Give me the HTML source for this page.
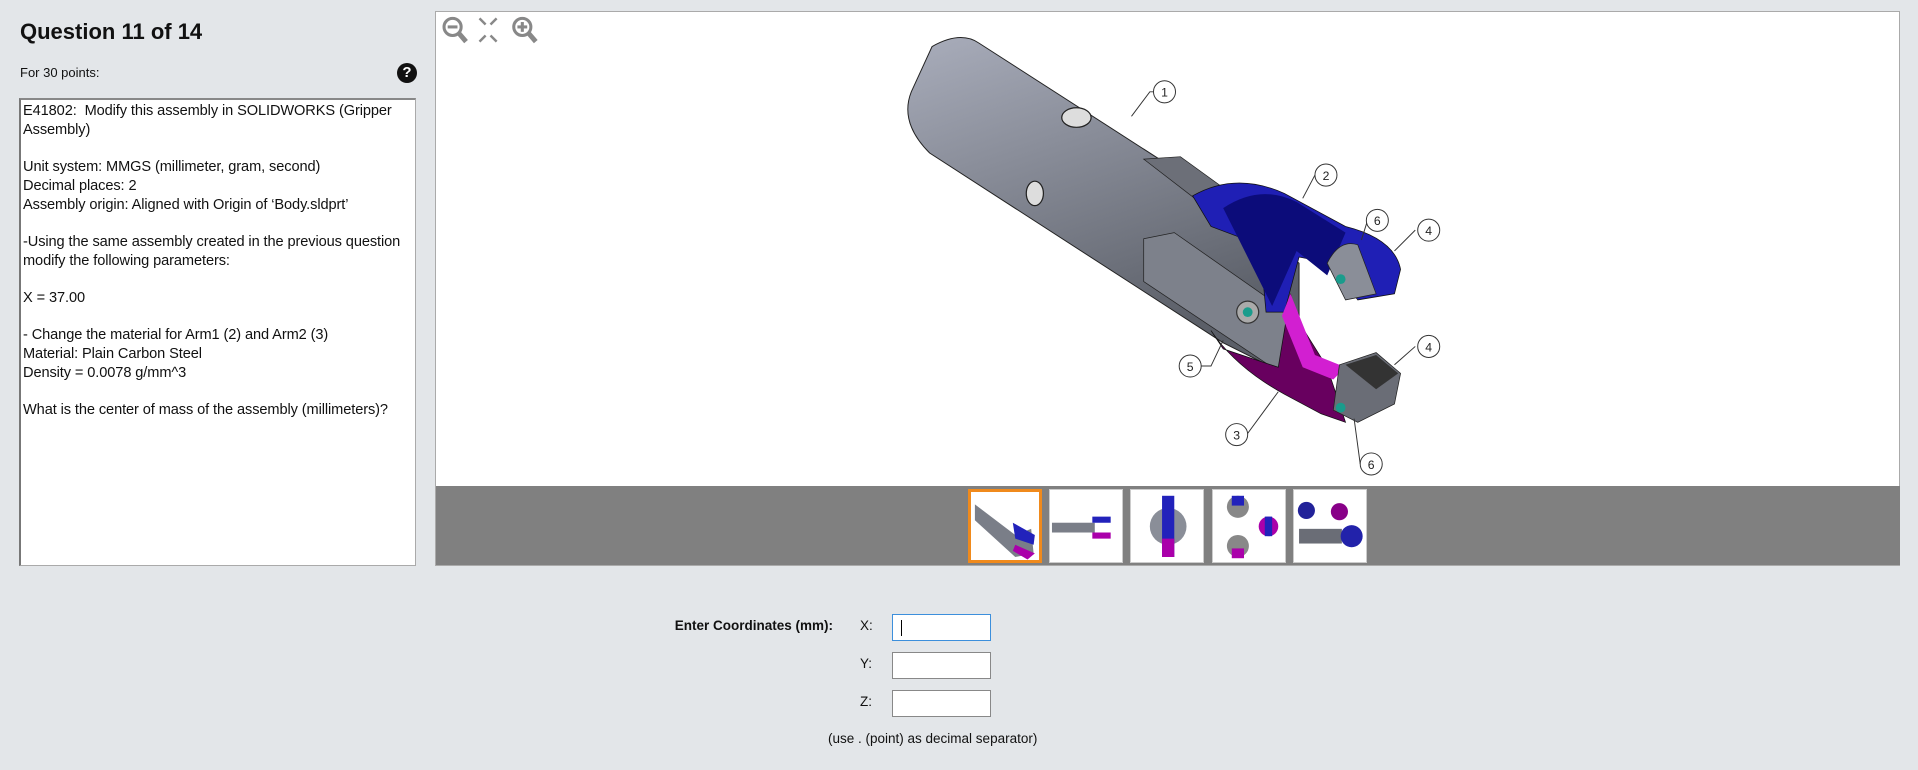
<!DOCTYPE html>
<html><head><meta charset="utf-8"><style>
*{margin:0;padding:0;box-sizing:border-box}
body{width:1918px;height:770px;background:#e3e6e9;font-family:"Liberation Sans",sans-serif;position:relative;overflow:hidden;color:#111}
.abs{position:absolute}
h1{position:absolute;left:20px;top:19px;font-size:22px;font-weight:bold}
.pts{left:20px;top:65px;font-size:13px}
.help{left:397px;top:63px;width:20px;height:20px;border-radius:50%;background:#111;color:#fff;font-weight:bold;font-size:15px;text-align:center;line-height:20px}
.tb{left:19px;top:98px;width:397px;height:468px;background:#fff;border:1px solid #aaa;border-left:2px solid #777;border-top:2px solid #888;padding:2px 2px;font-size:14.6px;line-height:18.7px;white-space:pre;overflow:hidden;letter-spacing:-0.1px}
.viewer{left:435px;top:11px;width:1465px;height:555px;background:#fff;border:1px solid #aaa}
.bar{left:436px;top:486px;width:1464px;height:79px;background:#808080}
.th{top:489px;width:74px;height:74px;background:#fff;border:1px solid #ccc}
.inp{left:892px;width:99px;height:27px;background:#fff;border:1px solid #888}
.lbl{font-size:13.5px}
</style></head><body>
<h1>Question 11 of 14</h1>
<div class="abs pts">For 30 points:</div>
<div class="abs help">?</div>
<div class="abs tb">E41802:  Modify this assembly in SOLIDWORKS (Gripper
Assembly)

Unit system: MMGS (millimeter, gram, second)
Decimal places: 2
Assembly origin: Aligned with Origin of ‘Body.sldprt’

-Using the same assembly created in the previous question
modify the following parameters:

X = 37.00

- Change the material for Arm1 (2) and Arm2 (3)
Material: Plain Carbon Steel
Density = 0.0078 g/mm^3

What is the center of mass of the assembly (millimeters)?</div>
<div class="abs viewer"></div>
<div class="abs bar"></div>
<div class="abs th" style="left:968px;border:3px solid #f08a1c"></div>
<div class="abs th" style="left:1049px"></div>
<div class="abs th" style="left:1130px"></div>
<div class="abs th" style="left:1212px"></div>
<div class="abs th" style="left:1293px"></div>
<svg class="abs" style="left:0;top:0" width="1918" height="770" viewBox="0 0 1568 629" preserveAspectRatio="none">
<defs><linearGradient id="g" x1="0" y1="0" x2="0.4" y2="1"><stop offset="0" stop-color="#a9adbb"/><stop offset="1" stop-color="#5b5f68"/></linearGradient></defs>
<g stroke="#888" fill="none" stroke-width="2.5">
<circle cx="370" cy="22" r="7"/><line x1="375" y1="27" x2="381" y2="34" stroke-width="4"/><line x1="366" y1="22" x2="374" y2="22"/>
<circle cx="427" cy="22" r="7"/><line x1="432" y1="27" x2="438" y2="34" stroke-width="4"/><line x1="423" y1="22" x2="431" y2="22"/><line x1="427" y1="18" x2="427" y2="26"/>
<path d="M392 15l5 5M406 15l-5 5M392 34l5-5M406 34l-5-5" stroke-width="2"/>
</g>
<path d="M762 38 Q785 25 800 35 L1010 170 L1062 215 L1062 300 L1040 300 L1000 280 L760 125 Q735 100 745 75 Z" fill="url(#g)" stroke="#222" stroke-width="0.8"/>
<ellipse cx="880" cy="96" rx="12" ry="8" fill="#ddd" stroke="#222"/>
<ellipse cx="846" cy="158" rx="7" ry="10" fill="#ddd" stroke="#222"/>
<path d="M935 130 L965 128 L1030 175 L1000 180 Z" fill="#6c6f78" stroke="#222" stroke-width="0.6"/>
<path d="M935 195 L960 190 L1060 260 L1060 300 L1040 300 L935 230 Z" fill="#7d818b" stroke="#222" stroke-width="0.6"/>
<path d="M975 160 Q1010 140 1050 158 L1100 185 Q1140 195 1145 220 L1140 240 L1110 245 L1088 215 L1062 210 L1050 255 L1035 255 L1030 200 L990 185 Z" fill="#1f1fb5" stroke="#111" stroke-width="0.6"/>
<path d="M1000 170 Q1030 150 1060 165 L1100 190 L1085 225 L1060 205 L1040 250 Z" fill="#0c0c7a"/>
<path d="M1085 215 Q1095 195 1110 200 L1125 240 L1100 245 Z" fill="#8a8e98" stroke="#222" stroke-width="0.6"/>
<circle cx="1096" cy="228" r="4" fill="#1a9c8c"/>
<path d="M990 270 Q1010 300 1050 322 L1080 338 L1100 345 L1085 300 L1060 260 L1055 240 L1045 300 L1000 285 Z" fill="#68005f" stroke="#111" stroke-width="0.6"/>
<path d="M1055 240 L1075 290 L1100 300 L1090 310 L1065 300 L1048 258 Z" fill="#d21fd1"/>
<circle cx="1020" cy="255" r="9" fill="#aaa" stroke="#333"/><circle cx="1020" cy="255" r="4" fill="#1a9c8c"/>
<path d="M1095 298 L1125 288 L1145 305 L1140 330 L1110 345 L1090 335 Z" fill="#6a6d76" stroke="#222" stroke-width="0.6"/>
<path d="M1100 298 L1125 290 L1143 305 L1125 318 Z" fill="#333"/>
<circle cx="1096" cy="333" r="4" fill="#1a9c8c"/>
<g stroke="#333" fill="#fff" stroke-width="0.8" font-family="Liberation Sans" font-size="10" text-anchor="middle">
<path d="M925 95 L940 75 L944 75M1065 162 L1075 143 L1075 143M1113 196 L1118 180M1140 205 L1157 188M1140 298 L1157 283M1000 278 L990 299 L981 299M1045 320 L1020 354M1107 342 L1112 379" fill="none"/>
<circle cx="952" cy="75" r="9"/><circle cx="1084" cy="143" r="9"/><circle cx="1126" cy="180" r="9"/><circle cx="1168" cy="188" r="9"/><circle cx="1168" cy="283" r="9"/><circle cx="973" cy="299" r="9"/><circle cx="1011" cy="355" r="9"/><circle cx="1121" cy="379" r="9"/>
<g fill="#222" stroke="none"><text x="952" y="79">1</text><text x="1084" y="147">2</text><text x="1126" y="184">6</text><text x="1168" y="192">4</text><text x="1168" y="287">4</text><text x="973" y="303">5</text><text x="1011" y="359">3</text><text x="1121" y="383">6</text></g>
</g>
<path d="M797 412 L830 437 L843 432 L845 452 L830 455 L797 425Z" fill="#7a7e88"/><path d="M828 427 L846 437 L845 445 L830 440Z" fill="#22b"/><path d="M830 445 L846 452 L840 457 L828 450Z" fill="#a0a"/>
<rect x="860" y="427" width="35" height="8" fill="#7a7e88"/><path d="M893 422 h15 v5 h-15z" fill="#22b"/><path d="M893 435 h15 v5 h-15z" fill="#a0a"/>
<circle cx="955" cy="430" r="15" fill="#8a8e98"/><rect x="950" y="405" width="10" height="50" fill="#22b"/><rect x="950" y="440" width="10" height="15" fill="#a0a"/>
<circle cx="1012" cy="414" r="9" fill="#888"/><rect x="1007" y="405" width="10" height="8" fill="#22b"/><circle cx="1012" cy="446" r="9" fill="#888"/><rect x="1007" y="448" width="10" height="8" fill="#a0a"/><circle cx="1037" cy="430" r="8" fill="#a0a"/><rect x="1034" y="422" width="6" height="16" fill="#22b"/>
<circle cx="1068" cy="417" r="7" fill="#229"/><circle cx="1095" cy="418" r="7" fill="#808"/><rect x="1062" y="432" width="35" height="12" fill="#6a6d76"/><circle cx="1105" cy="438" r="9" fill="#22a"/>
</svg>
<div class="abs lbl" style="left:660px;top:618px;width:173px;text-align:right;font-weight:bold">Enter Coordinates (mm):</div>
<div class="abs lbl" style="left:860px;top:618px">X:</div>
<div class="abs lbl" style="left:860px;top:656px">Y:</div>
<div class="abs lbl" style="left:860px;top:694px">Z:</div>
<div class="abs inp" style="top:614px;border-color:#3c8fdc"><div style="position:absolute;left:8px;top:5px;width:1px;height:16px;background:#000"></div></div>
<div class="abs inp" style="top:652px"></div>
<div class="abs inp" style="top:690px"></div>
<div class="abs lbl" style="left:828px;top:731px">(use . (point) as decimal separator)</div>
</body></html>
